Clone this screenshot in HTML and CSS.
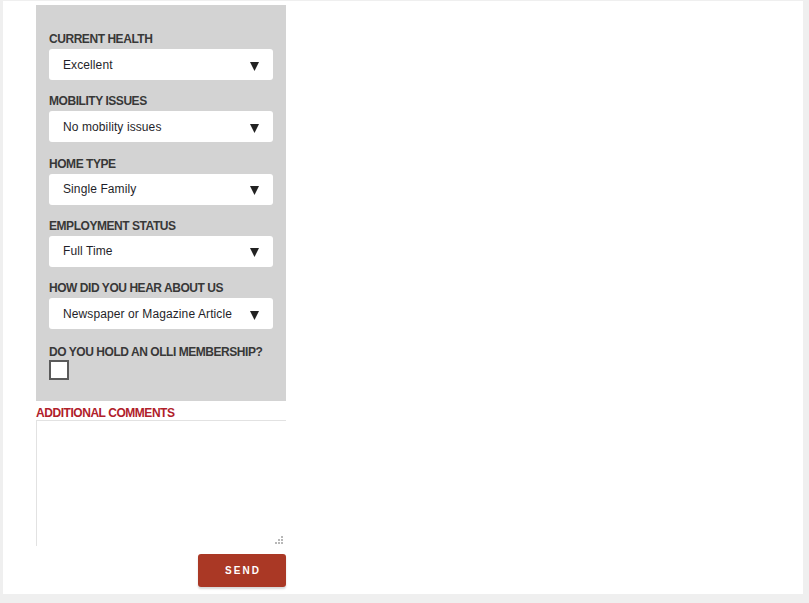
FILE: index.html
```html
<!DOCTYPE html>
<html lang="en">
<head>
<meta charset="utf-8">
<title>Form</title>
<link rel="stylesheet" href="styles.css">
</head>
<body>
<div class="page">
  <form class="form">
    <div class="panel">
      <div class="field">
        <div class="label">CURRENT HEALTH</div>
        <div class="select"><span>Excellent</span><svg class="arrow" width="9" height="9" viewBox="0 0 9 9"><polygon points="0,0 9,0 4.5,9"/></svg></div>
      </div>
      <div class="field">
        <div class="label">MOBILITY ISSUES</div>
        <div class="select"><span>No mobility issues</span><svg class="arrow" width="9" height="9" viewBox="0 0 9 9"><polygon points="0,0 9,0 4.5,9"/></svg></div>
      </div>
      <div class="field">
        <div class="label">HOME TYPE</div>
        <div class="select"><span>Single Family</span><svg class="arrow" width="9" height="9" viewBox="0 0 9 9"><polygon points="0,0 9,0 4.5,9"/></svg></div>
      </div>
      <div class="field">
        <div class="label">EMPLOYMENT STATUS</div>
        <div class="select"><span>Full Time</span><svg class="arrow" width="9" height="9" viewBox="0 0 9 9"><polygon points="0,0 9,0 4.5,9"/></svg></div>
      </div>
      <div class="field">
        <div class="label">HOW DID YOU HEAR ABOUT US</div>
        <div class="select"><span>Newspaper or Magazine Article</span><svg class="arrow" width="9" height="9" viewBox="0 0 9 9"><polygon points="0,0 9,0 4.5,9"/></svg></div>
      </div>
      <div class="field field-check">
        <div class="label">DO YOU HOLD AN OLLI MEMBERSHIP?</div>
        <div class="checkbox"></div>
      </div>
    </div>
    <div class="comments-label">ADDITIONAL COMMENTS</div>
    <div class="comments">
      <svg class="grip" width="9" height="9" viewBox="0 0 9 9"><rect x="6" y="0" width="2" height="2"/><rect x="3" y="3" width="2" height="2"/><rect x="6" y="3" width="2" height="2"/><rect x="0" y="6" width="2" height="2"/><rect x="3" y="6" width="2" height="2"/><rect x="6" y="6" width="2" height="2"/></svg>
    </div>
    <div class="actions">
      <button type="button" class="send">SEND</button>
    </div>
  </form>
</div>
</body>
</html>
```

FILE: styles.css
```css
html, body {
  margin: 0;
  padding: 0;
  height: 603px;
  overflow: hidden;
}
body {
  background: #efefef;
  font-family: "Liberation Sans", Arial, sans-serif;
}
.page {
  margin: 1px 6px 0 3px;
  height: 593px;
  background: #fff;
  padding: 4px 0 0 33px;
  box-sizing: border-box;
}
.form {
  width: 250px;
  display: flex;
  flex-direction: column;
}
.panel {
  background: #d3d3d3;
  padding: 27px 13px 21px;
  display: flex;
  flex-direction: column;
  gap: 14.25px;
}
.field {
  display: flex;
  flex-direction: column;
  gap: 3px;
}
.field-check {
  margin-top: 2px;
  gap: 0;
}
.label {
  font-size: 12px;
  line-height: 14px;
  font-weight: bold;
  color: #383838;
  letter-spacing: -0.45px;
  white-space: nowrap;
}
.select {
  height: 31px;
  background: #fff;
  border-radius: 3px;
  display: flex;
  align-items: center;
  justify-content: space-between;
  padding: 0 14px 0 14px;
  font-size: 12px;
  letter-spacing: 0.1px;
  color: #1f1f2a;
}
.arrow {
  fill: #222;
  margin-top: 3px;
}
.checkbox {
  width: 16px;
  height: 16px;
  margin-top: 1px;
  border: 2px solid #5a5a5a;
  background: #fff;
}
.comments-label {
  margin-top: 5px;
  font-size: 12px;
  line-height: 14px;
  font-weight: bold;
  color: #b0202a;
  letter-spacing: -0.45px;
}
.comments {
  position: relative;
  height: 126px;
  border-top: 1px solid #e2e2e2;
  border-left: 1px solid #e2e2e2;
  box-sizing: border-box;
}
.grip {
  position: absolute;
  right: 2px;
  bottom: 1px;
  fill: #b8b8b8;
}
.actions {
  display: flex;
  justify-content: flex-end;
  margin-top: 8px;
}
.send {
  width: 88px;
  height: 33px;
  border: none;
  border-radius: 3px;
  background: #aa3825;
  color: #fff;
  font-family: "Liberation Sans", Arial, sans-serif;
  font-size: 10px;
  font-weight: bold;
  letter-spacing: 2px;
  padding: 0 0 0 2px;
  box-shadow: 0 2px 2px #d8d8d8;
}
```
